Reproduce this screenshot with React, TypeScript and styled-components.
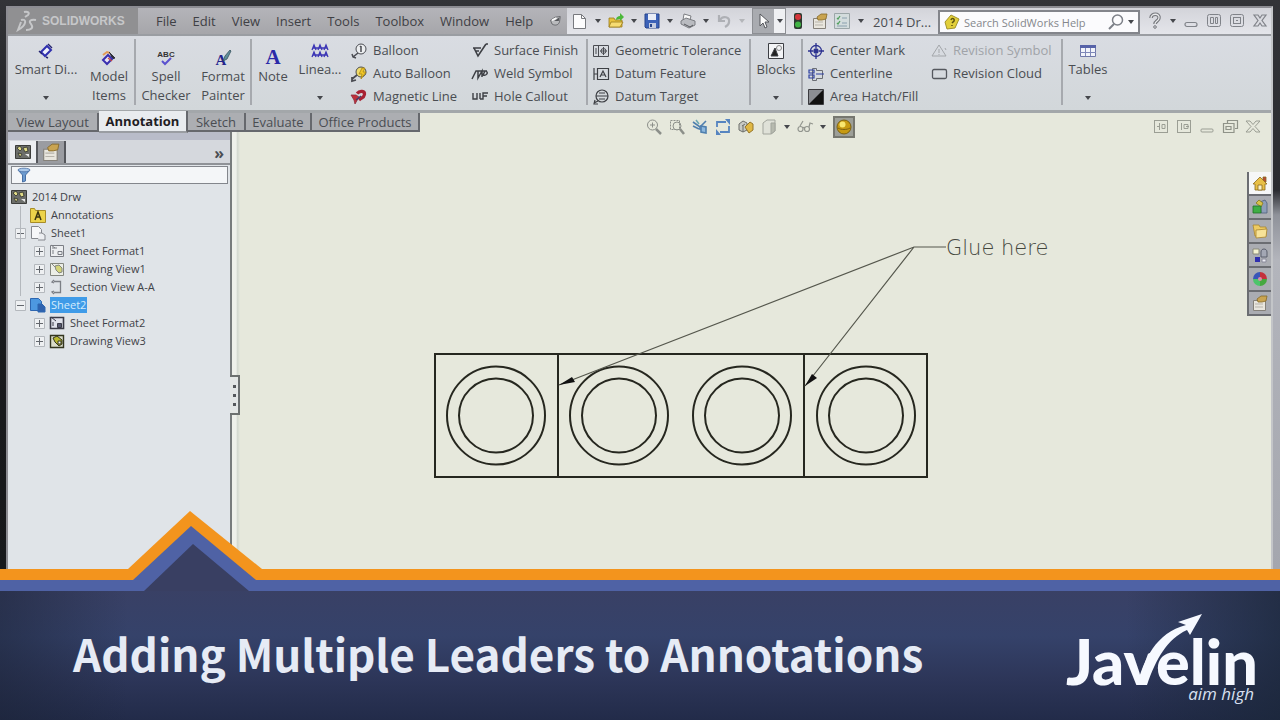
import React from 'react';
import styled, { createGlobalStyle, css } from 'styled-components';

const GlobalStyle = createGlobalStyle`
  * { box-sizing: border-box; }
  body { margin: 0; background: #1d1e22; }
  button, input { font: inherit; color: inherit; }
`;

const UI = `"Open Sans", "Noto Sans", sans-serif`;

/* ---------- icons ---------- */

const icons: Record<string, React.ReactNode> = {
  dimension: (
    <g fill="none" stroke="#2f2fae" strokeWidth="2">
      <path d="M3 9 9 3l4 4-6 6z" fill="#eef0fb" />
      <path d="M1 8l3 3M8 14l2 1M10 1l4 4" stroke="#23236e" strokeWidth="1.4" />
    </g>
  ),
  model: (
    <g fill="none">
      <path d="M2 5l4-3 3 1" stroke="#e39a55" strokeWidth="2" />
      <path d="M8 2l6 6-3 1" fill="#30303a" stroke="#30303a" />
      <path d="M2 10l5-5 4 4-5 5z" fill="#e9e4f4" stroke="#3a2fb0" strokeWidth="2" />
      <path d="M7 8l4 3" stroke="#c0454a" strokeWidth="1.4" />
    </g>
  ),
  spell: (
    <g>
      <text x="8" y="7" fontSize="8" fontWeight="700" textAnchor="middle" fill="#333" fontFamily="Liberation Sans, sans-serif">ABC</text>
      <path d="M4 11l3 3 6-6" fill="none" stroke="#5a52cf" strokeWidth="2" />
    </g>
  ),
  painter: (
    <g>
      <text x="6" y="15" fontSize="15" fontWeight="700" textAnchor="middle" fill="#23238c" fontFamily="Liberation Serif, serif">A</text>
      <path d="M15 0l-5 6-2 5 4-2 4-8z" fill="#5f8f9a" stroke="#35505c" strokeWidth=".8" />
    </g>
  ),
  note: <text x="8" y="14" fontSize="21" fontWeight="700" textAnchor="middle" fill="#2a2aa8" fontFamily="Liberation Serif, serif">A</text>,
  linear: (
    <g fill="none" stroke="#3b35b5" strokeWidth="1.3">
      <path d="M0 7l2-5 2 5M6 7l2-5 2 5M12 7l2-5 2 5M0 14l2-5 2 5M6 14l2-5 2 5M12 14l2-5 2 5M1 5h14M1 12h14" />
    </g>
  ),
  balloon: (
    <g fill="none" stroke="#4a4c52">
      <circle cx="10" cy="6" r="5" fill="#eceef0" />
      <path d="M10 3v6M9 4l1-1M7 10l-5 4M1 11l1 3 3 1" strokeWidth="1.5" />
    </g>
  ),
  autoBalloon: (
    <g fill="none" stroke="#4a4c52">
      <circle cx="10" cy="6" r="5" fill="#f0dc6a" />
      <path d="M6 9l-5 4M1 11v4l4-1" strokeWidth="1.8" />
      <path d="M11 2l-3 6h3l-1 5 5-7h-3l2-4z" fill="#f0c628" stroke="#a88512" strokeWidth=".8" />
    </g>
  ),
  magnet: (
    <g fill="none">
      <path d="M6 4.500c3-3.500 8-2.500 7.500 1S10 9 8 11" stroke="#a82233" strokeWidth="3.200" />
      <path d="M0 6h5l3 2-4 7-1-4z" stroke="#8d3040" fill="#c0303a" strokeWidth=".8" />
      <path d="M5 11l5-4" stroke="#3f3f6a" strokeWidth="1.5" />
    </g>
  ),
  surface: <path d="M1 5h8M2 5l4 8 8-12M4 8h3M14 1l2 0" fill="none" stroke="#3d3f44" strokeWidth="1.6" />,
  weld: <path d="M0 13l4-8h11M6 5v7l4-7v6M14 5c3 2 0 5-3 4l2-4" fill="none" stroke="#3d3f44" strokeWidth="1.5" />,
  hole: <path d="M1 4v6h4V4M8 4v6M8 10h3V4h5M11 7h4" fill="none" stroke="#3d3f44" strokeWidth="1.4" />,
  geo: (
    <g fill="none" stroke="#4a4c52">
      <path d="M.5 2.500h15v11H.5zM5.500 2.500v11" />
      <circle cx="10.500" cy="8" r="2.500" />
      <path d="M10.500 4v8M7 8h7M3 5v6" />
    </g>
  ),
  datum: (
    <g fill="none" stroke="#3d3f44" strokeWidth="1.2">
      <path d="M4.500 2.500h11v11h-11zM1 2v12M1 8h3" />
      <path d="M7 11l3-6 3 6M8 9h4" />
    </g>
  ),
  target: (
    <g fill="none" stroke="#3d3f44" strokeWidth="1.200">
      <circle cx="9" cy="7" r="6" />
      <path d="M3 7h12M6 4h6M6 10h6M5 12l-4 2M2 11l-1 4 4 0" />
    </g>
  ),
  blocks: (
    <g fill="none" stroke="#3d3f44">
      <path d="M.5 .5h15v15H.5z" fill="#f3f4f6" />
      <path d="M3 13l4-8 3 8z" fill="#222" />
      <circle cx="11" cy="5" r="2.500" stroke="#888" />
    </g>
  ),
  centerMark: (
    <g fill="none" stroke="#2c3290" strokeWidth="1.300">
      <circle cx="8" cy="8" r="5.500" />
      <circle cx="8" cy="8" r="2" fill="#2c3290" />
      <path d="M8 0v5M8 11v5M0 8h5M11 8h5" />
    </g>
  ),
  centerline: (
    <g fill="none">
      <path d="M4.500 2.500h4v2h6v8h-6v2h-4z" stroke="#6a6d74" />
      <path d="M1 4h5v3H1zM1 9h5v3H1zM8 8h8" stroke="#2c3fa0" strokeWidth="1.200" />
    </g>
  ),
  hatch: (
    <g>
      <path d="M.5.5h15v15H.5z" fill="#8b8d92" stroke="#3b3b3f" />
      <path d="M15 1v14H1z" fill="#111" />
    </g>
  ),
  revSymbol: (
    <g fill="none" stroke="#a3a6aa">
      <path d="M8 2l7 11H1z" />
      <path d="M8 6v4M8 11v1M14 5l1 2" />
    </g>
  ),
  revCloud: <rect x="1.500" y="3.500" width="14" height="9" rx="1.500" fill="none" stroke="#55585e" strokeWidth="1.300" />,
  tables: (
    <g>
      <path d="M.5 2.500h15v11H.5z" fill="#f2f4fa" stroke="#7078a8" />
      <path d="M0 2h16v3H0z" fill="#5763a8" />
      <path d="M0 9.500h16M5.500 5v8M10.500 5v8" stroke="#7f88b8" fill="none" />
    </g>
  ),
  page: (
    <g>
      <path d="M1.500 1.500h8l4 4v10h-12z" fill="#fcfcfd" stroke="#77797e" />
      <path d="M9.500 1.500v4h4" fill="none" stroke="#77797e" />
    </g>
  ),
  open: (
    <g>
      <path d="M1 5h5l1 2h7v7H1z" fill="#e8c23c" stroke="#9b7c1c" strokeWidth=".8" />
      <path d="M3 9h12l-3 5H1z" fill="#f6dc72" stroke="#9b7c1c" strokeWidth=".8" />
      <path d="M8 7c0-3 2-4 4-4V0l4 4-4 4V6c-1 0-2 0-4 1z" fill="#4bb83a" />
    </g>
  ),
  save: (
    <g>
      <path d="M1 1h14v14H2l-1-1z" fill="#3c62b8" stroke="#27458c" />
      <path d="M4 1h8v6H4z" fill="#e9edf7" />
      <path d="M5 10h7v5H5z" fill="#c4cce0" />
      <path d="M6 11h2v3H6z" fill="#27458c" />
    </g>
  ),
  print: (
    <g stroke="#7b7d82">
      <path d="M3 7l1-6 7 2-1 4z" fill="#fafafa" />
      <path d="M1 8l5-3 9 3v4l-6 3-8-4z" fill="#b9bbc0" />
      <path d="M4 11l6 3 3-2" fill="none" stroke="#55575c" />
    </g>
  ),
  undo: <path d="M3 2v6h6M4 7c3-5 10-3 9 2 0 3-2 4-4 5" fill="none" stroke="#aeb0b5" strokeWidth="2.200" />,
  cursor: <path d="M4 1v12l3-3 2 5 2-1-2-5h4z" fill="#fbfbfb" stroke="#55575c" />,
  traffic: (
    <g>
      <rect x="4" y="0" width="8" height="16" rx="2" fill="#2c3a30" />
      <circle cx="8" cy="4" r="3" fill="#d4343a" />
      <circle cx="8" cy="11.500" r="3" fill="#3fb344" />
    </g>
  ),
  props: (
    <g>
      <path d="M1.500 5.500h12v10h-12z" fill="#e9e6de" stroke="#85817a" />
      <path d="M3 9h8M3 12h8" stroke="#b7b3aa" />
      <path d="M5 4l4-3h6l-1 5-4 1H6z" fill="#c9a451" stroke="#876a2a" strokeWidth=".8" />
    </g>
  ),
  options: (
    <g>
      <path d="M.5 .5h15v15H.5z" fill="#d3dcdd" stroke="#9ba6a8" />
      <path d="M3 5l1 1 2-3M3 10l1 1 2-3" stroke="#52a05f" fill="none" strokeWidth="1.300" />
      <path d="M8 5h5M8 10h5M3 13h10" stroke="#8aa0ae" />
    </g>
  ),
  pin: (
    <g>
      <path d="M2 7l2 5c5 3 9 1 10-3l1-7-7 1z" fill="#b9babd" stroke="#55575b" />
      <path d="M7 8h6l1-5z" fill="#55575b" />
      <path d="M4 7l6-3" stroke="#fafafa" strokeWidth="2.500" />
    </g>
  ),
  helpSearch: (
    <g>
      <path d="M1 8l6-7 8 4-4 9-8 1z" fill="#e2cf3a" stroke="#a3942a" />
      <path d="M7 6c1-3 4-1 3 1L8 9M8 11v1" fill="none" stroke="#5b520f" strokeWidth="1.500" />
    </g>
  ),
  magnifier: (
    <g fill="none" stroke="#7d8088">
      <circle cx="9.500" cy="6" r="5" fill="#fcfcfe" strokeWidth="1.500" />
      <path d="M6 10l-5 5" strokeWidth="2" />
    </g>
  ),
  question: (
    <g fill="none" stroke="#75777c">
      <path d="M4 5c0-5 9-5 8 0 0 3-4 3-4 6" strokeWidth="3.500" />
      <path d="M4 5c0-5 9-5 8 0 0 3-4 3-4 6" stroke="#e9eaec" strokeWidth="1.300" />
      <circle cx="8" cy="14" r="1.300" />
    </g>
  ),
  min: <rect x="2" y="9.500" width="12" height="4" rx="2" fill="none" stroke="#808389" strokeWidth="1.200" />,
  tile: (
    <g fill="none" stroke="#808389">
      <rect x="1.500" y="1.500" width="13" height="12" rx="2" />
      <path d="M4.500 4.500h3v6h-3zM9.500 4.500h2v6h-2z" />
    </g>
  ),
  restore: (
    <g fill="none" stroke="#808389">
      <rect x="1.500" y="1.500" width="13" height="12" rx="2" />
      <rect x="4.500" y="4.500" width="7" height="6" />
      <path d="M7 7.500h2" />
    </g>
  ),
  close: (
    <path d="M2 2h4l2 3 2-3h4l-4 5.500 4 5.500h-4L8 10l-2 3H2l4-5.500z" fill="none" stroke="#808389" strokeWidth="1.200" />
  ),
  splitLeft: (
    <g fill="none" stroke="#9b9e94">
      <rect x="1.500" y="1.500" width="13" height="12" />
      <path d="M6.500 4v7M4 7.500h2M9 5.500h3v4H9z" />
    </g>
  ),
  splitRight: (
    <g fill="none" stroke="#9b9e94">
      <rect x="1.500" y="1.500" width="13" height="12" />
      <path d="M5.500 4v7M8 5.500h4v4H8zM10 7.500h3" />
    </g>
  ),
  docMin: <rect x="2" y="10" width="12" height="3" rx="1" fill="none" stroke="#9b9e94" />,
  cascade: (
    <g fill="none" stroke="#8f9288" strokeWidth="1.200">
      <path d="M5.500 4V1.500h10v8H13" />
      <path d="M1.500 4.500H12v9H1.500zM4 7.500h5v3H4z" />
    </g>
  ),
  docClose: (
    <path d="M1 2h4l3 3.500L11 2h4l-5 5.500 5 5.500h-4L8 9.500 5 13H1l5-5.500z" fill="none" stroke="#9b9e94" />
  ),
  zoomFit: (
    <g fill="none" stroke="#8c8f8a">
      <circle cx="6.500" cy="6" r="5" />
      <path d="M4 6h5M6.500 3.500v5" />
      <path d="M10 10l5 5" strokeWidth="2.500" />
    </g>
  ),
  zoomArea: (
    <g fill="none" stroke="#8c8f8a">
      <path d="M1.500 1.500h9v9h-9z" strokeDasharray="2 1" />
      <circle cx="8" cy="7" r="4" />
      <path d="M11 10l4 5" strokeWidth="2.500" />
    </g>
  ),
  section: (
    <g fill="none" stroke="#4f7fae" strokeWidth="1.600">
      <path d="M1 3l7 5 6-6M1 7l6 3M8 8v3" />
      <path d="M9 7l5 1v6l-5-1z" fill="#8db8de" />
      <path d="M4 1l3 4" stroke="#6aa7b4" />
    </g>
  ),
  rotate: (
    <g fill="none" stroke="#5684c0" strokeWidth="1.800">
      <path d="M2 8V3h9M14 7v6H5" />
      <path d="M10 0h5v6zM6 16H1v-6z" fill="#5684c0" stroke="none" />
    </g>
  ),
  view3d: (
    <g stroke="#6d6f6b">
      <path d="M1 5l4-3 4 2v7l-4 2-4-2z" fill="#c8cac4" />
      <path d="M7 8l5-5 3 2v6l-4 3z" fill="#e0b844" stroke="#96762a" />
      <path d="M5 6v7M4 7l3-2" fill="none" />
    </g>
  ),
  display: (
    <g stroke="#a2a59d">
      <path d="M2 4l4-3h8v11l-4 3H2z" fill="#dfe1d8" />
      <path d="M10 4h4v8l-4 3z" fill="#b7baaf" />
    </g>
  ),
  hide: (
    <g fill="none" stroke="#93968f" strokeWidth="1.200">
      <circle cx="3.500" cy="10" r="2.500" />
      <circle cx="10" cy="10" r="2.500" />
      <path d="M6 9c1-1 1-1 2 0M3 7l3-5M12 8l1-4 3 1" />
    </g>
  ),
  scene: (
    <g>
      <circle cx="8" cy="8" r="7" fill="#c79a12" stroke="#7c6212" />
      <path d="M2 9c3 2 9 2 12 0" stroke="#7c6212" fill="none" />
      <circle cx="6.500" cy="5.500" r="3" fill="#f8e670" />
    </g>
  ),
  drawing: (
    <g>
      <path d="M.5 1.500h15v13H.5z" fill="#6c6e6a" stroke="#3c3d3b" />
      <path d="M2 4l3-2 2 3-2 2zM8 4l4-1 1 4-3 1zM3 9l4 1-2 3z" fill="#e2dd87" stroke="#2f302c" strokeWidth=".8" />
      <path d="M10 10l4 3v-3z" fill="#e8e8e8" />
    </g>
  ),
  funnel: (
    <g>
      <path d="M2 3h12l-4.500 5v6l-3 1V8z" fill="#6c9bd0" stroke="#476fa4" />
      <ellipse cx="8" cy="3" rx="6" ry="1.800" fill="#abc9ea" stroke="#476fa4" strokeWidth=".8" />
    </g>
  ),
  annFolder: (
    <g>
      <path d="M.5 1.500h4l1 2h10v12H.5z" fill="#ecd34a" stroke="#a88d28" />
      <path d="M5 13l3-8 3 8M6 10h4" stroke="#3b350f" strokeWidth="1.500" fill="none" />
    </g>
  ),
  sheet: (
    <g stroke="#85888e">
      <path d="M1.500 1.500h7l3 3v9h-10z" fill="#f6f7f9" />
      <path d="M9 8h3l3 2v5H8" fill="#eceef1" />
    </g>
  ),
  sheetActive: (
    <g stroke="#2d66b0">
      <path d="M.5 1.500h8l3 3v9H.5z" fill="#4d98e0" />
      <path d="M8 7h4l3 3v5H8z" fill="#2f62ae" />
    </g>
  ),
  format: (
    <g stroke="#7b7e84">
      <path d="M1.500 2.500h13v11h-13z" fill="#eceef0" />
      <path d="M3 5h5M4 7v4M9 8.500h4v3H9z" fill="none" />
      <path d="M2 2l4 3" />
    </g>
  ),
  formatActive: (
    <g stroke="#3a3b47">
      <path d="M1.500 2.500h13v11h-13z" fill="#dfe1ea" strokeWidth="1.600" />
      <path d="M2 2l5 4M4 7v4M8.500 8.500h4v4h-4z" fill="#56586e" />
    </g>
  ),
  view: (
    <g stroke="#84877f">
      <path d="M1.500 2.500h13v12h-13z" fill="#eceee6" />
      <path d="M6 5l4-1 3 3v4l-3 1-3-3z" fill="#d3d478" />
      <path d="M2 2l4 4" />
    </g>
  ),
  viewActive: (
    <g stroke="#33351f">
      <path d="M1.500 2.500h13v12h-13z" fill="#d9dbc8" strokeWidth="1.400" />
      <path d="M4 5l4-2 5 4v4l-3 2-4-4z" fill="#b9b82f" />
      <path d="M9 8h3v3H9z" fill="#f3f3e6" />
    </g>
  ),
  sectionView: <path d="M5 2.500h6.500v11H5M5 1l-2 2 2 1M5 12l-2 1 2 2" fill="none" stroke="#7c7f85" strokeWidth="1.300" />,
  home: (
    <g stroke="#8a6a1c" strokeWidth=".8">
      <path d="M11 2h3v5h-3z" fill="#b84a3a" />
      <path d="M1 9l7-7 7 7h-2v6H3V9z" fill="#e8bf45" />
      <path d="M6 10h4v5H6z" fill="#fbf2c8" />
    </g>
  ),
  library: (
    <g strokeWidth=".8">
      <path d="M8 3l5-2 2 3v10H9z" fill="#8d9db8" stroke="#4f5f7c" />
      <path d="M4 4l3-3 4 3-2 4z" fill="#d7c24a" stroke="#85771a" />
      <path d="M1 7h8v7H1z" fill="#3fae45" stroke="#217028" />
    </g>
  ),
  folder: (
    <g stroke="#a88530" strokeWidth=".8">
      <path d="M1 2h6l1 2h6v9H3z" fill="#eecb62" />
      <path d="M4 7l11-1-1 8-10 1z" fill="#f7e398" />
    </g>
  ),
  palette: (
    <g>
      <path d="M1 2h6v5H1z" fill="#f4f2d0" stroke="#8a8a7a" />
      <path d="M9 5c0-4 6-4 6 0v5H9z" fill="#a3a7b4" stroke="#5b5f6d" />
      <path d="M3 10h5v5H3z" fill="#2f2fae" />
      <path d="M10 12h4v3h-4z" fill="#ececf4" stroke="#8a8a9a" />
    </g>
  ),
  wheel: (
    <g>
      <path d="M8 8V1a7 7 0 0 1 7 7z" fill="#c4303a" />
      <path d="M8 8h7a7 7 0 0 1-7 7z" fill="#46a83f" />
      <path d="M8 8v7a7 7 0 0 1-7-7z" fill="#4cc46a" />
      <path d="M8 8H1a7 7 0 0 1 7-7z" fill="#3a55b8" />
      <circle cx="8" cy="8" r="2" fill="#d88ea8" />
    </g>
  ),
};

const Svg = styled.svg`
  display: block;
  flex: none;
  overflow: visible;
`;

const Icon = ({ name, size = 16 }: { name: string; size?: number }) => (
  <Svg width={size} height={size} viewBox="0 0 16 16" aria-hidden="true">{icons[name]}</Svg>
);

const Caret = ({ faint }: { faint?: boolean }) => (
  <Svg width="6" height="4" viewBox="0 0 6 4" aria-hidden="true">
    <path d="M0 0h6L3 4z" fill={faint ? '#b4b6ba' : '#45474c'} />
  </Svg>
);

/* ---------- shell ---------- */

const Page = styled.div`
  display: flex;
  flex-direction: column;
  min-height: 100vh;
  font-family: ${UI};
  font-size: 13px;
  line-height: 19px;
  color: #4a4d52;
`;

const Monitor = styled.div`
  display: flex;
  flex: 1;
  padding: 6px 7px 0 6px;
  background:
    linear-gradient(#333438, #2a2b30 190px, #8f929a 215px, #b3b5bc 260px, #a4a6ae) right / 7px 100% no-repeat,
    linear-gradient(#333438, #1c1d20 30%, #17181a);
`;

const AppWindow = styled.div`
  display: flex;
  flex-direction: column;
  flex: 1;
  min-width: 0;
  border: solid #8c8c92;
  border-width: 2px 2px 0 2px;
  border-right-color: #c3c5c8;
  background: #e6e8dc;
`;

const plainButton = css`
  border: 0;
  padding: 0;
  background: none;
  cursor: pointer;
`;

/* ---------- title bar ---------- */

const TitleBar = styled.header`
  display: flex;
  height: 28px;
  border-bottom: 2px solid #9a9da2;
  background: linear-gradient(#d3d4da, #e4e5ea);
`;

const Brand = styled.div`
  display: flex;
  align-items: center;
  gap: 4px;
  width: 130px;
  padding-left: 8px;
  background: #909092;
  color: #c6c7c9;
  font: 700 12px/20px "Liberation Sans", sans-serif;
`;

const MenuBar = styled.nav`
  display: flex;
  align-items: center;
  gap: 16px;
  width: 429px;
  padding-left: 18px;
  background: linear-gradient(#b4b4b9, #a6a6aa);
`;

const MenuItem = styled.button`
  ${plainButton}
  color: #3f4045;
`;

const QuickBar = styled.div`
  display: flex;
  align-items: center;
  gap: 4px;
  padding-left: 5px;
`;

const QuickButton = styled.button<{ $w?: number }>`
  ${plainButton}
  display: flex;
  align-items: center;
  justify-content: center;
  width: ${p => p.$w ?? 16}px;
  height: 24px;
`;

const SplitSelect = styled.div`
  display: flex;
  height: 26px;
  border: 1px solid #8c8e93;
  background: #eff0f3;

  button:first-child { background: #a9abb0; }
`;

const QuickGroup = styled.div`
  display: flex;
  align-items: center;
  gap: 6px;
`;

const DocTitle = styled.span`
  flex: 1;
  padding-left: 7px;
  line-height: 28px;
  white-space: nowrap;
`;

const SearchBox = styled.label`
  display: flex;
  align-items: center;
  gap: 4px;
  width: 202px;
  height: 24px;
  margin-top: 2px;
  padding: 0 4px;
  border: 2px solid #83858b;
  background: #fbfbfd;
`;

const SearchInput = styled.input`
  flex: 1;
  min-width: 0;
  border: 0;
  padding: 0;
  outline: 0;
  background: none;
  font-size: 11px;

  &::placeholder { color: #85878c; opacity: 1; }
`;

const WindowControls = styled.div`
  display: flex;
  align-items: center;
  gap: 7px;
  padding: 0 3px 0 7px;
`;

/* ---------- ribbon ---------- */

const Ribbon = styled.div`
  display: flex;
  height: 77px;
  padding: 3px 0;
  border-bottom: 3px solid #a3a7aa;
  background: linear-gradient(#d9dce2, #d2d7da);
`;

const Group = styled.div`
  display: flex;
  height: 66px;
  border-right: 2px solid #a6a9ae;

  &:last-child { border-right: 0; }
`;

const Tall = styled.button<{ $w: number; $low?: boolean }>`
  ${plainButton}
  display: flex;
  flex-direction: column;
  align-items: center;
  width: ${p => p.$w}px;
  padding-top: ${p => (p.$low ? 11 : 4)}px;
  white-space: nowrap;

  span { margin-top: 1px; }
  svg:nth-of-type(2) { margin-top: 17px; }
`;

const Column = styled.div<{ $w: number }>`
  display: flex;
  flex-direction: column;
  width: ${p => p.$w}px;
  padding-left: 5px;
`;

const Small = styled.button`
  ${plainButton}
  display: flex;
  flex: none;
  align-items: center;
  gap: 6px;
  height: 23px;
  white-space: nowrap;

  &:disabled { color: #a0a3a8; cursor: default; }
`;

/* ---------- view bar ---------- */

const ViewBar = styled.div`
  position: relative;
  z-index: 1;
  display: flex;
  align-items: flex-start;
  height: 19px;
`;

const Tabs = styled.nav`
  display: flex;
  flex: none;
  line-height: 16px;
`;

const Tab = styled.button<{ $active?: boolean; $w: number }>`
  ${plainButton}
  width: ${p => p.$w}px;
  height: 19px;
  border-right: 2px solid #66686d;
  border-bottom: 2px solid #66686d;
  background: #acaeb2;
  white-space: nowrap;
  ${p => p.$active && css`
    height: 22px;
    margin-top: -2px;
    border-bottom-color: #9a9da2;
    background: #e9ecef;
    color: #1f2023;
    font-weight: 700;
  `}
`;

const ViewTools = styled.div`
  display: flex;
  align-items: center;
  gap: 7px;
  height: 23px;
  margin: 2px auto 0;
  padding-right: 72px;
`;

const SceneButton = styled.button`
  ${plainButton}
  display: flex;
  align-items: center;
  justify-content: center;
  width: 22px;
  height: 22px;
  border: 2px solid #76776f;
  background: #9d9f98;
`;

const DocControls = styled.div`
  display: flex;
  align-items: center;
  gap: 7px;
  height: 23px;
  margin-top: 2px;
  padding-right: 10px;
`;

/* ---------- workspace ---------- */

const Workspace = styled.div`
  display: flex;
  flex: 1;
`;

const SidePanel = styled.aside`
  width: 222px;
  border-top: 8px solid #b9bcc9;
  background: #e0e4e8;
`;

const PanelTabs = styled.div`
  display: flex;
  align-items: flex-end;
  height: 25px;
  padding-left: 2px;
  border-bottom: 2px solid #8f9297;
  background: #d5d8dd;
`;

const PanelTab = styled.button<{ $active?: boolean }>`
  ${plainButton}
  display: flex;
  align-items: center;
  justify-content: center;
  width: 28px;
  height: 22px;
  border-right: 2px solid #55575c;
  background: ${p => (p.$active ? '#eceef1' : '#9a9ca1')};
`;

const Expand = styled.button`
  ${plainButton}
  margin: 0 6px 0 auto;
  font-size: 16px;
  font-weight: 700;
  line-height: 20px;
`;

const Filter = styled.label`
  display: flex;
  align-items: center;
  height: 18px;
  margin: 1px 2px 0 3px;
  padding-left: 4px;
  border: 1px solid #83868c;
  background: #f4f6f8;
`;

const FilterInput = styled.input`
  flex: 1;
  min-width: 0;
  height: 14px;
  border: 0;
  outline: 0;
  background: none;
  font-size: 11px;
`;

const Tree = styled.ul`
  margin: 0;
  padding: 4px 0 0 3px;
  list-style: none;
  font-size: 11px;
  line-height: 16px;
  color: #3f4247;
`;

const Node = styled.li<{ $depth: number }>`
  position: relative;
  display: flex;
  align-items: center;
  gap: 4px;
  height: 18px;
  padding-left: ${p => p.$depth * 19}px;
  white-space: nowrap;
`;

const Toggle = styled.button`
  ${plainButton}
  display: flex;
  width: 11px;
  margin-left: -15px;
`;

const NodeLabel = styled.span<{ $selected?: boolean }>`
  padding: 0 1px;
  ${p => p.$selected && css`
    background: #3f9be8;
    color: #d4ebfc;
  `}
`;

const Branch = styled.span`
  position: absolute;
  left: 9px;
  top: 0;
  width: 8px;
  height: 18px;
  border-left: 1px solid #b4b8bd;
`;

const Splitter = styled.div`
  position: relative;
  width: 10px;
  border-left: 2px solid #777b7c;
  background: linear-gradient(90deg, #eef0ea 50%, #d3d8cf 70%, #e6e8dc);
`;

const Grip = styled.div`
  position: absolute;
  top: 243px;
  left: -2px;
  display: flex;
  flex-direction: column;
  align-items: flex-end;
  justify-content: center;
  gap: 6px;
  width: 10px;
  height: 40px;
  padding-right: 2px;
  border: 2px solid #6c706f;
  border-left: 0;
  background: #e4e7e5;

  i { width: 3px; height: 3px; background: #55585a; }
`;

const Canvas = styled.main`
  display: flex;
  flex: 1;
  justify-content: center;
  padding-top: 98px;
  background: #e6e8dc;
`;

const TaskPane = styled.div`
  display: flex;
  flex-direction: column;
  flex: none;
  width: 24px;
  padding-top: 40px;
`;

const TaskButton = styled.button<{ $active?: boolean }>`
  ${plainButton}
  display: flex;
  align-items: center;
  justify-content: center;
  height: 24px;
  border: solid #6b6d72;
  border-width: 0 0 2px 2px;
  background: ${p => (p.$active ? '#f6f7f7' : '#aaacb2')};
`;

/* ---------- banner ---------- */

const Banner = styled.footer`
  position: relative;
  display: flex;
  align-items: center;
  justify-content: space-between;
  height: 151px;
  padding: 6px 24px 0 73px;
  border-top: 11px solid #f3941d;
  background:
    linear-gradient(#4f62a5, #4f62a5) top / 100% 11px no-repeat,
    linear-gradient(90deg, rgba(26, 34, 52, .5), transparent 10%, transparent 88%, rgba(26, 38, 56, .7)),
    linear-gradient(#3a4064, #35426a 40%, #2d3659 70%, #222b49);
`;

const Peak = styled.svg`
  position: absolute;
  top: -69px;
  left: 128px;
`;

const Headline = styled.h1`
  margin: 0;
  color: #e6ebf5;
  font: 700 44px/60px "Noto Sans CJK SC", "Open Sans", sans-serif;
  white-space: nowrap;
`;

const menus = ['File', 'Edit', 'View', 'Insert', 'Tools', 'Toolbox', 'Window', 'Help'];

const quick: [string, string][] = [
  ['page', 'New'], ['open', 'Open'], ['save', 'Save'], ['print', 'Print'], ['undo', 'Undo'],
];

const columns = {
  notes: [['balloon', 'Balloon'], ['autoBalloon', 'Auto Balloon'], ['magnet', 'Magnetic Line']],
  symbols: [['surface', 'Surface Finish'], ['weld', 'Weld Symbol'], ['hole', 'Hole Callout']],
  datums: [['geo', 'Geometric Tolerance'], ['datum', 'Datum Feature'], ['target', 'Datum Target']],
  centers: [['centerMark', 'Center Mark'], ['centerline', 'Centerline'], ['hatch', 'Area Hatch/Fill']],
  revisions: [['revSymbol', 'Revision Symbol'], ['revCloud', 'Revision Cloud']],
};

const SmallColumn = ({ items, w }: { items: string[][]; w: number }) => (
  <Column $w={w}>
    {items.map(([icon, label]) => (
      <Small key={label} disabled={icon === 'revSymbol'}><Icon name={icon} />{label}</Small>
    ))}
  </Column>
);

const TallTool = ({ icon, lines, w, low, menu }: { icon: string; lines: string[]; w: number; low?: boolean; menu?: boolean }) => (
  <Tall $w={w} $low={low}>
    <Icon name={icon} />
    <span>{lines.map((l, i) => <React.Fragment key={l}>{i > 0 && <br />}{l}</React.Fragment>)}</span>
    {menu && <Caret />}
  </Tall>
);

const viewTools: [string, string, boolean?][] = [
  ['zoomFit', 'Zoom to Fit'], ['zoomArea', 'Zoom to Area'], ['section', 'Section View'],
  ['rotate', 'Rotate View'], ['view3d', '3D Drawing View'], ['display', 'Display Style', true],
  ['hide', 'Hide/Show Items', true],
];

const docControls: [string, string][] = [
  ['splitLeft', 'Dock left'], ['splitRight', 'Dock right'], ['docMin', 'Minimize document'],
  ['cascade', 'Restore document'], ['docClose', 'Close document'],
];

type TreeNode = { icon: string; label: string; depth: number; toggle?: '+' | '-'; selected?: boolean; branch?: boolean };

const nodes: TreeNode[] = [
  { icon: 'drawing', label: '2014 Drw', depth: 0 },
  { icon: 'annFolder', label: 'Annotations', depth: 1, branch: true },
  { icon: 'sheet', label: 'Sheet1', depth: 1, toggle: '-', branch: true },
  { icon: 'format', label: 'Sheet Format1', depth: 2, toggle: '+', branch: true },
  { icon: 'view', label: 'Drawing View1', depth: 2, toggle: '+', branch: true },
  { icon: 'sectionView', label: 'Section View A-A', depth: 2, toggle: '+', branch: true },
  { icon: 'sheetActive', label: 'Sheet2', depth: 1, toggle: '-', selected: true },
  { icon: 'formatActive', label: 'Sheet Format2', depth: 2, toggle: '+' },
  { icon: 'viewActive', label: 'Drawing View3', depth: 2, toggle: '+' },
];

const Drawing = () => (
  <Svg width="620" height="256" viewBox="0 0 620 256" role="img" aria-label="Part drawing with a glue note">
    <g fill="none" stroke="#26271f">
      <path d="M1 124h492v123H1zM124 124v123M370 124v123" strokeWidth="2" />
      {[62, 185, 308, 432].map(cx => (
        <g key={cx} strokeWidth="2">
          <circle cx={cx} cy="185.500" r="49" />
          <circle cx={cx} cy="185.500" r="37" />
        </g>
      ))}
      <path d="M512 17H480L125 155M480 17 371 156" stroke="#55574d" strokeWidth="1.200" />
      <path d="M125 155l13-8 3 5zM371 156l7-12 5 4z" fill="#111" stroke="none" />
    </g>
    <text x="512" y="25" fontFamily="DejaVu Sans, sans-serif" fontWeight="200" fontSize="21" fill="#45473e">Glue here</text>
  </Svg>
);

const JavelinLogo = () => (
  <Svg width="192" height="104" viewBox="0 0 192 104" role="img" aria-label="Javelin aim high">
    <g fill="#f6f9ff">
      <text x="2" y="84" fontFamily="Lato, sans-serif" fontWeight="900" fontSize="63">Javelin</text>
      <path d="M73 84C80 58 92 32 122 24l-8-3 24-8-12 21-3-5C103 38 92 58 83 84z" />
      <text x="190" y="99" textAnchor="end" fontFamily="Open Sans, sans-serif" fontStyle="italic" fontSize="17" fill="#d8e0f0">aim high</text>
    </g>
  </Svg>
);

export default function App() {
  return (
    <Page>
      <GlobalStyle />
      <Monitor>
        <AppWindow>
          <TitleBar>
            <Brand>
              <Svg width="22" height="22" viewBox="0 0 22 22" aria-hidden="true">
                <g fill="none" stroke="#c6c7c9" strokeWidth="2">
                  <path d="M8 2c4-1 6 1 4 3l-3 2" />
                  <path d="M5 10c6-2 6 5-3 10l3-8" />
                  <path d="M20 10c-5-1-8 1-5 4 3 4 0 6-5 6" />
                </g>
              </Svg>
              SOLIDWORKS
            </Brand>
            <MenuBar aria-label="Main menu">
              {menus.map(m => <MenuItem key={m}>{m}</MenuItem>)}
              <QuickButton $w={12} aria-label="Pin menu"><Icon name="pin" size={12} /></QuickButton>
            </MenuBar>
            <QuickBar>
              {quick.map(([icon, label]) => (
                <React.Fragment key={icon}>
                  <QuickButton aria-label={label}><Icon name={icon} /></QuickButton>
                  <QuickButton $w={12} aria-label={`${label} options`}><Caret faint={icon === 'undo'} /></QuickButton>
                </React.Fragment>
              ))}
              <SplitSelect>
                <QuickButton $w={21} aria-label="Select"><Icon name="cursor" /></QuickButton>
                <QuickButton $w={11} aria-label="Select options"><Caret /></QuickButton>
              </SplitSelect>
              <QuickGroup>
                <QuickButton aria-label="Rebuild"><Icon name="traffic" /></QuickButton>
                <QuickButton aria-label="File properties"><Icon name="props" /></QuickButton>
                <QuickButton aria-label="Options"><Icon name="options" /></QuickButton>
                <QuickButton $w={10} aria-label="More options"><Caret /></QuickButton>
              </QuickGroup>
            </QuickBar>
            <DocTitle>2014 Dr...</DocTitle>
            <SearchBox>
              <Icon name="helpSearch" />
              <SearchInput type="search" aria-label="Search SolidWorks Help" placeholder="Search SolidWorks Help" />
              <Icon name="magnifier" />
              <Caret />
            </SearchBox>
            <WindowControls>
              <QuickButton aria-label="Help"><Icon name="question" /></QuickButton>
              <QuickButton $w={6} aria-label="Help options"><Caret /></QuickButton>
              <QuickButton aria-label="Minimize"><Icon name="min" /></QuickButton>
              <QuickButton aria-label="Tile"><Icon name="tile" /></QuickButton>
              <QuickButton aria-label="Restore"><Icon name="restore" /></QuickButton>
              <QuickButton aria-label="Close"><Icon name="close" /></QuickButton>
            </WindowControls>
          </TitleBar>

          <Ribbon>
            <Group>
              <TallTool icon="dimension" lines={['Smart Di...']} w={76} menu />
              <TallTool icon="model" lines={['Model', 'Items']} w={50} low />
            </Group>
            <Group>
              <TallTool icon="spell" lines={['Spell', 'Checker']} w={60} low />
              <TallTool icon="painter" lines={['Format', 'Painter']} w={54} low />
            </Group>
            <Group>
              <TallTool icon="note" lines={['Note']} w={42} low />
              <TallTool icon="linear" lines={['Linea...']} w={52} menu />
              <SmallColumn items={columns.notes} w={121} />
              <SmallColumn items={columns.symbols} w={119} />
            </Group>
            <Group><SmallColumn items={columns.datums} w={161} /></Group>
            <Group><TallTool icon="blocks" lines={['Blocks']} w={50} menu /></Group>
            <Group>
              <SmallColumn items={columns.centers} w={123} />
              <SmallColumn items={columns.revisions} w={135} />
            </Group>
            <Group><TallTool icon="tables" lines={['Tables']} w={50} menu /></Group>
          </Ribbon>

          <ViewBar>
            <Tabs aria-label="Command tabs">
              <Tab $w={91}>View Layout</Tab>
              <Tab $w={89} $active>Annotation</Tab>
              <Tab $w={58}>Sketch</Tab>
              <Tab $w={66}>Evaluate</Tab>
              <Tab $w={108}>Office Products</Tab>
            </Tabs>
            <ViewTools>
              {viewTools.map(([icon, label, menu]) => (
                <React.Fragment key={icon}>
                  <QuickButton aria-label={label}><Icon name={icon} /></QuickButton>
                  {menu && <QuickButton $w={6} aria-label={`${label} options`}><Caret /></QuickButton>}
                </React.Fragment>
              ))}
              <SceneButton aria-label="Apply Scene"><Icon name="scene" /></SceneButton>
            </ViewTools>
            <DocControls>
              {docControls.map(([icon, label]) => (
                <QuickButton key={icon} aria-label={label}><Icon name={icon} /></QuickButton>
              ))}
            </DocControls>
          </ViewBar>

          <Workspace>
            <SidePanel>
              <PanelTabs>
                <PanelTab $active aria-label="Feature tree"><Icon name="drawing" /></PanelTab>
                <PanelTab aria-label="Properties"><Icon name="props" size={18} /></PanelTab>
                <Expand aria-label="Expand panel">»</Expand>
              </PanelTabs>
              <Filter>
                <Icon name="funnel" />
                <FilterInput aria-label="Filter tree" />
              </Filter>
              <Tree>
                {nodes.map(n => (
                  <Node key={n.label} $depth={n.depth}>
                    {n.branch && <Branch />}
                    {n.toggle && (
                      <Toggle aria-label={`Toggle ${n.label}`}>
                        <Svg width="11" height="11" viewBox="0 0 11 11" aria-hidden="true">
                          <path d="M.5.5h10v10H.5z" fill="#eef0f2" stroke="#b4b8bd" />
                          <path d={n.toggle === '+' ? 'M2 5.500h7M5.500 2v7' : 'M2 5.500h7'} stroke="#63676d" />
                        </Svg>
                      </Toggle>
                    )}
                    <Icon name={n.icon} />
                    <NodeLabel $selected={n.selected}>{n.label}</NodeLabel>
                  </Node>
                ))}
              </Tree>
            </SidePanel>
            <Splitter><Grip><i /><i /><i /></Grip></Splitter>
            <Canvas><Drawing /></Canvas>
            <TaskPane>
              <TaskButton $active aria-label="Resources"><Icon name="home" /></TaskButton>
              <TaskButton aria-label="Design Library"><Icon name="library" /></TaskButton>
              <TaskButton aria-label="File Explorer"><Icon name="folder" /></TaskButton>
              <TaskButton aria-label="View Palette"><Icon name="palette" /></TaskButton>
              <TaskButton aria-label="Appearances"><Icon name="wheel" /></TaskButton>
              <TaskButton aria-label="Custom Properties"><Icon name="props" /></TaskButton>
            </TaskPane>
          </Workspace>
        </AppWindow>
      </Monitor>

      <Banner>
        <Peak width="134" height="80" viewBox="0 0 134 80" aria-hidden="true">
          <path d="M0 58 62 0l72 58v11H0z" fill="#f3941d" />
          <path d="M5 69 63 15l65 54v11H5z" fill="#4f62a5" />
          <path d="M16 80 65 33l56 47z" fill="#393f62" />
        </Peak>
        <Headline>Adding Multiple Leaders to Annotations</Headline>
        <JavelinLogo />
      </Banner>
    </Page>
  );
}
